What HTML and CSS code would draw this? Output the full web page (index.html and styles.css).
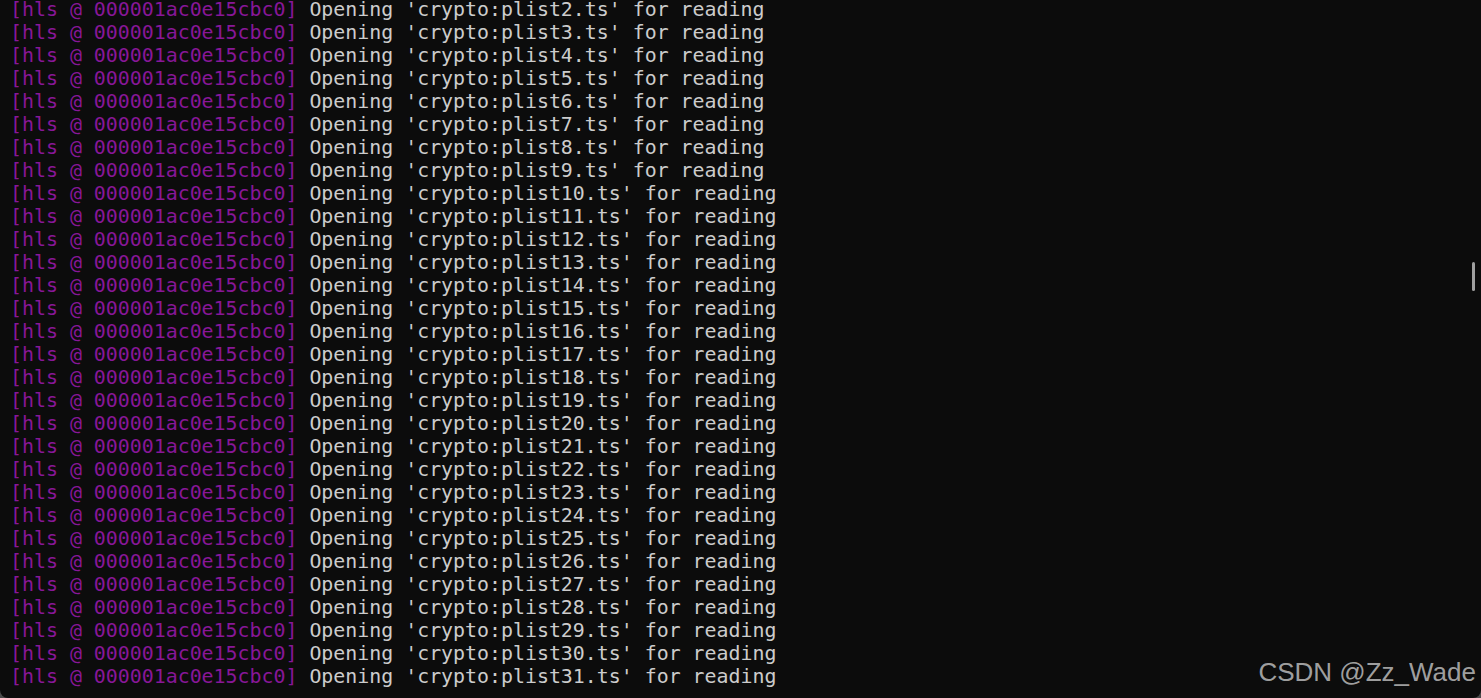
FILE: index.html
```html
<!DOCTYPE html>
<html lang="en">

<head>
    <meta charset="UTF-8">
    <title>hls</title>
    <link rel="stylesheet" href="styles.css">
</head>

<body>
    <div class="term-wrap">
        <pre class="term-out"><span class="tag">[hls @ 000001ac0e15cbc0]</span> Opening 'crypto:plist2.ts' for reading
<span class="tag">[hls @ 000001ac0e15cbc0]</span> Opening 'crypto:plist3.ts' for reading
<span class="tag">[hls @ 000001ac0e15cbc0]</span> Opening 'crypto:plist4.ts' for reading
<span class="tag">[hls @ 000001ac0e15cbc0]</span> Opening 'crypto:plist5.ts' for reading
<span class="tag">[hls @ 000001ac0e15cbc0]</span> Opening 'crypto:plist6.ts' for reading
<span class="tag">[hls @ 000001ac0e15cbc0]</span> Opening 'crypto:plist7.ts' for reading
<span class="tag">[hls @ 000001ac0e15cbc0]</span> Opening 'crypto:plist8.ts' for reading
<span class="tag">[hls @ 000001ac0e15cbc0]</span> Opening 'crypto:plist9.ts' for reading
<span class="tag">[hls @ 000001ac0e15cbc0]</span> Opening 'crypto:plist10.ts' for reading
<span class="tag">[hls @ 000001ac0e15cbc0]</span> Opening 'crypto:plist11.ts' for reading
<span class="tag">[hls @ 000001ac0e15cbc0]</span> Opening 'crypto:plist12.ts' for reading
<span class="tag">[hls @ 000001ac0e15cbc0]</span> Opening 'crypto:plist13.ts' for reading
<span class="tag">[hls @ 000001ac0e15cbc0]</span> Opening 'crypto:plist14.ts' for reading
<span class="tag">[hls @ 000001ac0e15cbc0]</span> Opening 'crypto:plist15.ts' for reading
<span class="tag">[hls @ 000001ac0e15cbc0]</span> Opening 'crypto:plist16.ts' for reading
<span class="tag">[hls @ 000001ac0e15cbc0]</span> Opening 'crypto:plist17.ts' for reading
<span class="tag">[hls @ 000001ac0e15cbc0]</span> Opening 'crypto:plist18.ts' for reading
<span class="tag">[hls @ 000001ac0e15cbc0]</span> Opening 'crypto:plist19.ts' for reading
<span class="tag">[hls @ 000001ac0e15cbc0]</span> Opening 'crypto:plist20.ts' for reading
<span class="tag">[hls @ 000001ac0e15cbc0]</span> Opening 'crypto:plist21.ts' for reading
<span class="tag">[hls @ 000001ac0e15cbc0]</span> Opening 'crypto:plist22.ts' for reading
<span class="tag">[hls @ 000001ac0e15cbc0]</span> Opening 'crypto:plist23.ts' for reading
<span class="tag">[hls @ 000001ac0e15cbc0]</span> Opening 'crypto:plist24.ts' for reading
<span class="tag">[hls @ 000001ac0e15cbc0]</span> Opening 'crypto:plist25.ts' for reading
<span class="tag">[hls @ 000001ac0e15cbc0]</span> Opening 'crypto:plist26.ts' for reading
<span class="tag">[hls @ 000001ac0e15cbc0]</span> Opening 'crypto:plist27.ts' for reading
<span class="tag">[hls @ 000001ac0e15cbc0]</span> Opening 'crypto:plist28.ts' for reading
<span class="tag">[hls @ 000001ac0e15cbc0]</span> Opening 'crypto:plist29.ts' for reading
<span class="tag">[hls @ 000001ac0e15cbc0]</span> Opening 'crypto:plist30.ts' for reading
<span class="tag">[hls @ 000001ac0e15cbc0]</span> Opening 'crypto:plist31.ts' for reading</pre>
        <div class="scroll-thumb"></div>
        <div class="watermark">CSDN @Zz_Wade</div>
    </div>
</body>

</html>
```

FILE: styles.css
```css
html,
body {
    padding: 0;
    margin: 0;

    height: 100%;
    width: 100%;
    overflow: hidden;
    background-color: #4a4a4a;
}

.term-wrap {
    position: relative;
    height: 698px;

    background-color: #0c0c0c;
    border-radius: 0 0 8px 8px;
    overflow: hidden;
}

.term-out {
    margin: -2px 0 0;
    padding: 0 0 0 10px;

    font-family: "DejaVu Sans Mono", "Liberation Mono", monospace;
    font-size: 19.9px;
    line-height: 23px;
    color: #cccccc;
}

.tag {
    color: #881798;
}

.scroll-thumb {
    position: absolute;
    top: 262px;
    left: 1472px;

    width: 3px;
    height: 29px;
    border-radius: 2px;
    background-color: #a0a0a0;
}

.watermark {
    position: absolute;
    right: 5px;
    bottom: 13px;

    font-family: "Liberation Sans", Arial, sans-serif;
    font-size: 26px;
    line-height: 1;
    color: rgba(200, 200, 200, 0.8);
}
```
